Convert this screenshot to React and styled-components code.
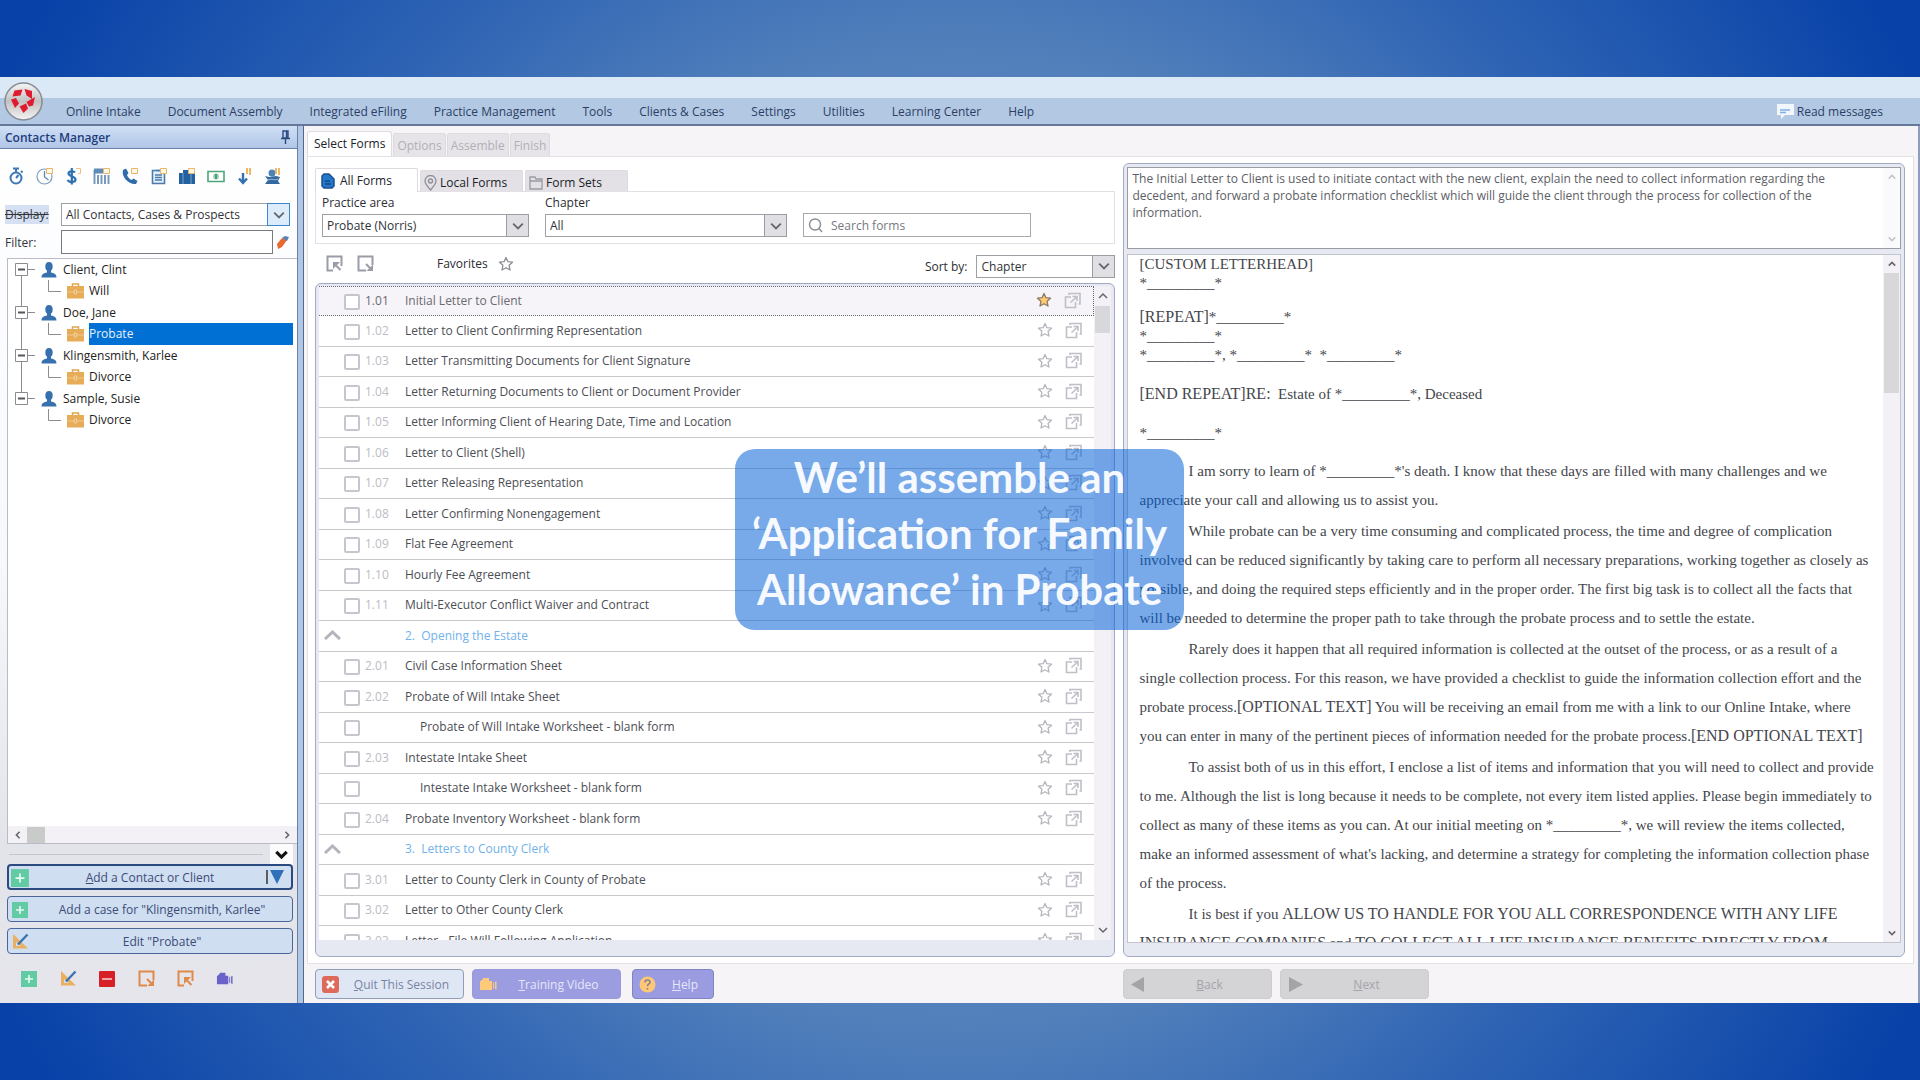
import React, { Component } from 'react';
import styled, { createGlobalStyle } from 'styled-components';

const GlobalStyle = createGlobalStyle`
  * { box-sizing: border-box; }
  body {
    margin: 0;
    font-family: "Open Sans", "Noto Sans", sans-serif;
    font-size: 12px;
    color: #2b2d33;
  }
  button, input, select {
    font-family: inherit;
    font-size: inherit;
    color: inherit;
  }
  svg { display: block; flex: none; }
`;

const Stage = styled.div`
  position: relative;
  display: flex;
  flex-direction: column;
  height: 100vh;
  padding: 77px 0;
  overflow: hidden;
  background: radial-gradient(circle farthest-corner at 50% 50%, #6794c5 0%, #5280bb 44%, #2f64b4 65%, #0842a8 96%);
`;

const Window = styled.div`
  flex: 1;
  min-height: 0;
  display: flex;
  flex-direction: column;
  background: #f6f4f7;
`;

const Header = styled.header`
  position: relative;
  background: #dbe8f5;
  padding-top: 21px;
`;

const Logo = styled.div`
  position: absolute;
  left: 4px;
  top: 5px;
`;

const MenuBar = styled.nav`
  display: flex;
  align-items: center;
  gap: 27px;
  height: 28px;
  padding: 0 37px 0 66px;
  background: #b3c8e2;
  border-bottom: 2px solid #66789a;
  color: #2b3f66;
`;

const MenuLink = styled.a`
  color: inherit;
  text-decoration: none;
  white-space: nowrap;
`;

const MessagesLink = styled(MenuLink)`
  display: flex;
  align-items: center;
  gap: 2px;
  margin-left: auto;
`;

const Body = styled.div`
  flex: 1;
  min-height: 0;
  display: flex;
`;

const SidePanel = styled.aside`
  display: flex;
  flex-direction: column;
  flex: none;
  width: 298px;
  border-right: 1px solid #6a80a8;
  background: linear-gradient(#ffffff 0%, #f6f8fc 50%, #e2e4ea 82%, #e6e5ec 100%);
`;

const SideTitle = styled.h2`
  display: flex;
  align-items: center;
  justify-content: space-between;
  height: 23px;
  margin: 0;
  padding: 0 7px 0 5px;
  font-size: 12px;
  font-weight: 600;
  color: #1d3c7c;
  background: linear-gradient(#cfdff5, #b0c6e6);
  border-bottom: 1px solid #6a80a8;
`;

const ToolRow = styled.div`
  display: flex;
  align-items: center;
  justify-content: space-between;
  height: 54px;
  padding: 0 15px 0 7px;
`;

const IconButton = styled.button`
  display: flex;
  padding: 0;
  border: 0;
  background: none;
`;

const FieldRow = styled.div`
  display: grid;
  grid-template-columns: 56px 1fr;
  align-items: center;
  padding: 0 7px 0 5px;
  margin-bottom: 4px;
`;

const FilterLine = styled.div`
  display: grid;
  grid-template-columns: 1fr 17px;
  align-items: center;
`;

const FieldLabel = styled.label`
  justify-self: start;
  padding: 1px 0;
  color: #33353b;
  background: ${props => props.$struck ? '#d5e1f3' : 'none'};
  text-decoration: ${props => props.$struck ? 'line-through' : 'none'};
`;

const TextInput = styled.input`
  width: 100%;
  height: 24px;
  border: 1px solid #7a7a7e;
  background: #fff;
  outline: none;
`;

const SelectBox = styled.div`
  display: grid;
  grid-template-columns: 1fr 22px;
  height: 23px;
  border: 1px solid #9fa0a6;
  background: #fff;
  color: #303238;
`;

const SelectInput = styled.select`
  grid-row: 1;
  grid-column: 1 / 3;
  width: 100%;
  height: 21px;
  padding: 0 4px;
  border: 0;
  outline: none;
  appearance: none;
  background: transparent;
`;

const SelectArrow = styled.span`
  grid-row: 1;
  grid-column: 2;
  display: flex;
  align-items: center;
  justify-content: center;
  height: 23px;
  margin: -1px -1px 0 0;
  pointer-events: none;
  border: 1px solid ${props => props.$blue ? '#3b86cf' : '#9c9ca2'};
  background: ${props => props.$blue ? '#dcecfa' : '#e0dfe3'};
`;

const Tree = styled.div`
  flex: 1;
  min-height: 0;
  display: flex;
  flex-direction: column;
  margin: 0 0 0 7px;
  background: #fff;
  border: solid #b9bcc4;
  border-width: 1px 0 1px 1px;
  color: #222;
`;

const TreeList = styled.ul`
  flex: 1;
  margin: 0;
  padding: 0;
  list-style: none;
`;

const TreeGroup = styled.li`
  display: grid;
  grid-template-columns: 33px 1fr;
  height: 43px;
`;

const TreeParent = styled.div`
  display: flex;
  align-items: center;
  gap: 6px;
  height: 21px;
`;

const TreeChild = styled.div`
  display: flex;
  align-items: center;
  height: 22px;
`;

const TreeName = styled.span`
  flex: 1;
  margin: 0 4px 0 5px;
  line-height: 22px;
  color: ${props => props.$selected ? '#e8f1fc' : 'inherit'};
  background: ${props => props.$selected ? '#0070d4' : 'none'};
`;

const HScroll = styled.div`
  display: flex;
  align-items: center;
  height: 17px;
  padding: 0 6px;
  background: #f3f1f5;
`;

const HThumb = styled.div`
  width: 18px;
  height: 16px;
  margin: 0 auto 0 5px;
  background: #c9cbcb;
`;

const Divider = styled.div`
  display: flex;
  align-items: center;
  justify-content: space-between;
  height: 16px;
  margin: 2px 4px 2px 9px;
  & > i {
    flex: 1;
    height: 1px;
    margin-right: 7px;
    background: #c2c8c6;
  }
  & > span {
    width: 23px;
    padding: 4px 5px;
    background: #fbfbfc;
  }
`;

const SideButton = styled.button`
  display: grid;
  grid-template-columns: ${props => props.$main ? '24px 1fr 24px' : '24px 1fr'};
  align-items: center;
  height: 26px;
  margin: 0 4px 6px 7px;
  padding: ${props => props.$main ? '0 2px' : '0 4px'};
  border: ${props => props.$main ? '2px solid #2b4a80' : '1px solid #4b669a'};
  border-radius: 4px;
  background: #cfdef0;
  color: #3b4c78;
`;

const SideTools = styled.div`
  display: flex;
  justify-content: space-between;
  padding: 10px 64px 16px 21px;
`;

const Splitter = styled.div`
  flex: none;
  width: 6px;
  background: #b0c8e6;
  border-right: 1px solid #56678a;
`;

const Main = styled.main`
  flex: 1;
  min-width: 0;
  display: flex;
  flex-direction: column;
  padding: 5px 4px 0 3px;
  border-right: 2px solid #8d9cc0;
`;

const StepTabs = styled.div`
  display: flex;
  align-items: flex-end;
  gap: 1px;
  height: 25px;
`;

const StepTab = styled.button`
  height: ${props => props.$active ? '26px' : '23px'};
  margin-bottom: ${props => props.$active ? '-1px' : '0'};
  padding: ${props => props.$active ? '0 6px 2px' : '1px 3px 0'};
  border: solid #dddbe0;
  border-width: 1px 1px 0;
  border-radius: 3px 3px 0 0;
  background: ${props => props.$active ? '#fff' : '#e6e4e8'};
  color: ${props => props.$active ? '#202228' : '#b2b0b6'};
`;

const Panel = styled.div`
  flex: 1;
  min-height: 0;
  display: grid;
  grid-template-columns: minmax(0, 801fr) minmax(0, 782fr);
  gap: 8px;
  padding: 0 8px 6px 7px;
  background: #fff;
  border: 1px solid #e3e1e6;
`;

const FormsColumn = styled.section`
  display: flex;
  flex-direction: column;
  min-height: 0;
  padding-top: 11px;
`;

const FormTabs = styled.div`
  display: flex;
  align-items: flex-end;
  gap: 2px;
  height: 24px;
`;

const FormTab = styled.button`
  position: relative;
  display: flex;
  align-items: center;
  gap: ${props => props.$active ? '5px' : '3px'};
  width: 103px;
  height: ${props => props.$active ? '24px' : '22px'};
  padding: ${props => props.$active ? '0 0 0 5px' : '2px 0 0 3px'};
  border: solid #dddbe0;
  border-width: 1px 1px 0;
  border-radius: 2px 2px 0 0;
  background: ${props => props.$active ? '#fff' : '#e3e1e6'};
  color: #202228;
  font-weight: ${props => props.$active ? 400 : 500};
`;

const Filters = styled.div`
  display: grid;
  grid-template-columns: 207px 242px 228px;
  column-gap: 16px;
  align-items: end;
  height: 53px;
  margin-top: -1px;
  padding: 0 6px 6px;
  border: 1px solid #e2e0e5;
`;

const FilterField = styled.div`
  display: flex;
  flex-direction: column;
  gap: 3px;
  line-height: 17px;
`;

const SearchBox = styled.label`
  display: flex;
  align-items: center;
  gap: 8px;
  height: 24px;
  padding: 0 4px;
  border: 1px solid #a9a9b0;
`;

const SearchInput = styled.input`
  flex: 1;
  min-width: 0;
  padding: 0;
  border: 0;
  outline: none;
  background: none;
  &::placeholder {
    color: #77797f;
    opacity: 1;
  }
`;

const ListTools = styled.div`
  display: flex;
  align-items: center;
  height: 39px;
  padding: 2px 0 2px 11px;
  gap: 14px;
`;

const Favorites = styled.span`
  display: flex;
  align-items: center;
  gap: 10px;
  margin-left: 49px;
`;

const SortBy = styled.div`
  display: grid;
  grid-template-columns: auto 139px;
  align-items: center;
  gap: 9px;
  margin-left: auto;
  padding-top: 5px;
`;

const Frame = styled.div`
  flex: 1;
  min-height: 0;
  display: flex;
  padding: 2px 3px 16px;
  border: 1px solid #a4a9c6;
  border-radius: 6px;
  background: #e6e8f2;
`;

const FormRows = styled.div`
  flex: 1;
  min-width: 0;
  overflow: hidden;
  background: #fff;
`;

const FormRow = styled.div`
  display: grid;
  grid-template-columns: 25px 21px 40px 1fr 28px 29px;
  align-items: center;
  height: 30px;
  padding-bottom: 2px;
  border-bottom: 1px solid #c9c8cd;
  color: ${props => props.$active ? '#6a6a72' : '#4c4e55'};
  &:nth-child(even) { height: 31px; }
  ${props => props.$active && `
    border: 1px dotted #66666e;
    background: #f6f4f8;
    margin-left: -1px;
  `}
`;

const FormNumber = styled.span`
  color: ${props => props.$active ? '#6a6a72' : '#bcbcc4'};
`;

const FormTitle = styled.label`
  padding-left: ${props => props.$indent ? '15px' : '0'};
  white-space: pre;
`;

const ChapterTitle = styled.span`
  grid-column: 4;
  color: #70b2ea;
  white-space: pre;
`;

const Chevron = styled.span`
  grid-column: 1;
  padding-left: 5px;
`;

const Check = styled.input`
  appearance: none;
  width: 16px;
  height: 16px;
  margin: 3px 0 0;
  border: 2px solid #c6c6cf;
  border-radius: 2px;
  background: #fff;
`;

const VScroll = styled.div`
  flex: none;
  display: flex;
  flex-direction: column;
  align-items: center;
  width: 17px;
  padding: 5px 0;
  background: ${props => props.$plain ? '#faf9fb' : '#f3f1f6'};
  & > svg:last-child { margin-top: auto; }
`;

const VThumb = styled.div`
  width: 15px;
  height: ${props => props.$tall ? '120px' : '27px'};
  margin-top: 5px;
  background: #d8d8da;
`;

const PreviewColumn = styled.section`
  display: flex;
  flex-direction: column;
  min-height: 0;
  padding-top: 6px;
`;

const PreviewFrame = styled(Frame)`
  flex-direction: column;
  gap: 5px;
  padding: 3px 3px 13px;
`;

const Summary = styled.div`
  display: flex;
  height: 82px;
  border: 1px solid #9b9ba6;
  background: #fff;
  color: #5c5e65;
  & > p {
    flex: 1;
    margin: 0;
    padding: 2px 0 0 4px;
    line-height: 17px;
    white-space: nowrap;
  }
`;

const Document = styled.div`
  flex: 1;
  min-height: 0;
  display: flex;
  border: 1px solid #c4c4ce;
  background: #fff;
`;

const Page = styled.article`
  flex: 1;
  min-width: 0;
  overflow: hidden;
  padding-left: 11px;
  font-family: "Liberation Serif", "Times New Roman", serif;
  font-size: 15px;
  color: #44464c;
  white-space: pre;
`;

const Block = styled.p`
  margin: 0 0 ${props => props.$gap || 0}px;
  line-height: 19px;
`;

const Paragraph = styled.p`
  margin: 0 0 2px;
  line-height: 29px;
  text-indent: 49px;
`;

const Caps = styled.span`
  font-size: 16px;
  line-height: 1;
`;

const Footer = styled.footer`
  display: grid;
  grid-template-columns: minmax(0, 808fr) minmax(0, 791fr);
  padding: 5px 0 4px 8px;
`;

const ButtonGroup = styled.div`
  display: flex;
  gap: 8px;
`;

const FooterButton = styled.button`
  display: grid;
  grid-template-columns: 18px 1fr;
  align-items: center;
  gap: 6px;
  width: ${props => props.$small ? '82px' : '149px'};
  height: 30px;
  margin-left: ${props => props.$small ? '3px' : '0'};
  padding: 0 6px;
  border: 1px solid ${props => props.$edge};
  border-radius: 4px;
  background: ${props => props.$fill};
  color: ${props => props.$ink};
`;

const Callout = styled.div`
  position: absolute;
  left: 50%;
  top: 449px;
  width: 449px;
  height: 181px;
  margin-left: -225px;
  border-radius: 20px;
  background: rgba(0, 95, 215, 0.53);
  color: rgba(255, 255, 255, 0.94);
  font-family: Lato, sans-serif;
  font-size: 42px;
  font-weight: 700;
  line-height: 56px;
  text-align: center;
  white-space: nowrap;
`;

const ArrowIcon = ({ dir = 'down', size = 10, color = '#66676d', width = 2 }) => {
  const paths = {
    down: 'M1 3l4 4 4-4',
    up: 'M1 7l4-4 4 4',
    left: 'M7 1L3 5l4 4',
    right: 'M3 1l4 4-4 4'
  };
  return (
    <svg width={size} height={size} viewBox="0 0 10 10" fill="none" stroke={color} strokeWidth={width}>
      <path d={paths[dir]} />
    </svg>
  );
};

const Icon = ({ children, size = 18 }) => (
  <svg width={size} height={size} viewBox="0 0 18 18" fill="none">{children}</svg>
);

const NoteTag = () => <path d="M10.5 1.5h6v5h-6z" fill="#fff6e4" stroke="#e9b76a" />;
const LockTag = () => <path d="M11 1h2v6h-2zM14 1h2v7h-2z" fill="#eeb865" />;

const StarIcon = ({ filled, color = '#b5b5bd', size = 16 }) => (
  <svg width={size} height={size} viewBox="0 0 16 16">
    <path
      d="M8 1.5l1.900 4.200 4.600.5-3.400 3.100.9 4.700L8 11.700 4 14l.9-4.700L1.500 6.200l4.600-.5z"
      fill={filled ? '#ffcb74' : '#fff'}
      stroke={filled ? '#8a7a66' : color}
      strokeWidth="1.300"
      strokeLinejoin="round"
    />
  </svg>
);

const OpenIcon = () => (
  <svg width="17" height="17" viewBox="0 0 17 17" fill="none" stroke="#bfbfc7" strokeWidth="1.600">
    <path d="M7 5H1.500v10.500h10V10" />
    <path d="M5 3V1.500h11V12h-1.500" />
    <path d="M6.500 10.500L13 4.500M8.500 4.500H13V9" />
  </svg>
);

const InArrowIcon = ({ color, size = 17 }) => (
  <svg width={size} height={size} viewBox="0 0 17 17" fill="none" stroke={color} strokeWidth="2">
    <path d="M7 15.500H1.500v-14h14V11" />
    <path d="M14.500 15L9 9.500" />
    <path d="M7 7h7l-7 7z" fill={color} stroke="none" />
  </svg>
);

const OutArrowIcon = ({ color, size = 17 }) => (
  <svg width={size} height={size} viewBox="0 0 17 17" fill="none" stroke={color} strokeWidth="2">
    <path d="M9 15.500H1.500v-14h14V10" />
    <path d="M9 9l5 5" />
    <path d="M16 9.500V16H9.500z" fill={color} stroke="none" />
  </svg>
);

const PlusIcon = ({ size = 17 }) => (
  <svg width={size} height={size} viewBox="0 0 17 17">
    <path d="M0 1h16v16H0z" fill="#62cba3" />
    <path d="M8 5v8M4 9h8" stroke="#e4faf0" strokeWidth="1.600" />
  </svg>
);

const EditIcon = () => (
  <svg width="17" height="17" viewBox="0 0 17 17">
    <path d="M1 1v14.500h15z" fill="#eab060" />
    <path d="M4 9v4h5z" fill="#cfdef0" />
    <path d="M15.500 1.500L6 11.500" stroke="#3b74b4" strokeWidth="2.400" />
  </svg>
);

const CameraIcon = ({ color, size = 18 }) => (
  <svg width={size} height={size} viewBox="0 0 18 18" fill={color}>
    <path d="M1 6.500L4 4V3h6v3h3v9H1z" />
    <path d="M14 8l1-1v7l-1-1zM16 7l1.500-1v9L16 14z" />
  </svg>
);

const PersonIcon = () => (
  <svg width="16" height="16" viewBox="0 0 16 16" fill="#3671ae">
    <ellipse cx="8" cy="4.500" rx="3.700" ry="4.500" />
    <path d="M6 8h4v2.500c3 .5 5.500 1.500 5.500 5H.5c0-3.500 2.500-4.500 5.500-5z" />
  </svg>
);

const CaseIcon = () => (
  <svg width="17" height="16" viewBox="0 0 17 16">
    <path d="M5.500 3V1h6v2" fill="none" stroke="#dfa650" strokeWidth="1.500" />
    <path d="M0 3h17v12.500H0z" fill="#e6ac57" />
    <path d="M0 9h6.500M10.500 9H17" stroke="#f0c98c" />
    <ellipse cx="8.500" cy="9" rx="1.500" ry="2.200" fill="none" stroke="#f7dcae" />
  </svg>
);

const LogoIcon = () => (
  <svg width="39" height="39" viewBox="0 0 39 39">
    <defs>
      <linearGradient id="silver" x1="0" y1="0" x2="0" y2="1">
        <stop offset="0" stopColor="#f6f6f6" />
        <stop offset="0.500" stopColor="#c2c2c2" />
        <stop offset="1" stopColor="#f4f4f4" />
      </linearGradient>
    </defs>
    <circle cx="19.500" cy="19.500" r="18.500" fill="url(#silver)" stroke="#858b95" strokeWidth="1.500" />
    <g fill="#e01b30">
      <path d="M10.500 8.500l8-1-2 6-8 1z" />
      <path d="M20.500 7l7.500 2v8l-5.500-3.500z" />
      <path d="M31 15l-2 8.500-4 1-2.500-4.500z" />
      <path d="M15.500 24.500l6.500-3 2 5-4.500 4.500z" />
      <path d="M7 17.500l5-1.500 3 5.500-4 4.500z" />
    </g>
  </svg>
);

const sideIcons = [
  <Icon><circle cx="9" cy="11" r="5.500" stroke="#3f78b4" strokeWidth="2" /><path d="M6 1.500h6M9 1.500V5M9 11l2.500-3M14 4l1.500 1.500" stroke="#3f78b4" strokeWidth="2" /></Icon>,
  <Icon><circle cx="8.500" cy="9.500" r="7.500" stroke="#7f9cbd" strokeWidth="1.200" /><path d="M8.500 4v6l4 3" stroke="#5f85b0" strokeWidth="1.300" /><NoteTag /></Icon>,
  <Icon><path d="M11 5.500C10 4 4.500 3.500 4.500 6.500S11.500 9 11.500 12.500 5 15.500 3.500 13M7.800 1v16.500" stroke="#2f70b2" strokeWidth="2.200" /><path d="M12 1.500h4.500v5H14" stroke="#ecc083" /></Icon>,
  <Icon><path d="M1.500 3v14M5 8v9M8.500 8v9M12 8v9M15.500 8v9" stroke="#7899bd" strokeWidth="2" /><path d="M1 1.500h9v5H1z" fill="#5f8bb8" /><NoteTag /></Icon>,
  <Icon><path d="M2 3l3-1.500L7.500 6 6 8c1 2.500 2.500 4 4.500 5l2-1.500 4 2.500-1.500 3C8 18 0 10 2 3z" fill="#2f6ca8" /><NoteTag /></Icon>,
  <Icon><path d="M2.500 3.500h12v13h-12z" fill="#e6eef7" stroke="#4a7bad" strokeWidth="1.600" /><path d="M5 8h7M5 10.500h7M5 13h7M6 3.500h4" stroke="#4a7bad" strokeWidth="1.400" /><NoteTag /></Icon>,
  <Icon><path d="M1 6h16v11H1zM5 3h7v3H5z" fill="#23609f" /><path d="M5 6v11M13 6v11" stroke="#7ba3cb" /><NoteTag /></Icon>,
  <Icon><path d="M1 4.500h16v10H1z" fill="#fff" stroke="#4fa57c" strokeWidth="1.600" /><circle cx="9" cy="9.500" r="3" fill="#9fd2b8" /><path d="M9 7v5" stroke="#2f8a5c" strokeWidth="1.500" /></Icon>,
  <Icon><path d="M8 6v10M4 11.500l4 4.500 4-4.500" stroke="#3671ae" strokeWidth="2.400" /><LockTag /></Icon>,
  <Icon><circle cx="8" cy="6" r="3.500" fill="#4c82b8" /><path d="M1 9l4 1 7-1 4 1-2 4 2 3H1l3-4z" fill="#34699f" /><path d="M4 13c4-2 7 1 10-1" stroke="#9abbe0" /><LockTag /></Icon>
];

const menuItems = ['Online Intake', 'Document Assembly', 'Integrated eFiling', 'Practice Management', 'Tools',
  'Clients & Cases', 'Settings', 'Utilities', 'Learning Center', 'Help'];

const contacts = [
  { name: 'Client, Clint', matter: 'Will' },
  { name: 'Doe, Jane', matter: 'Probate', selected: true },
  { name: 'Klingensmith, Karlee', matter: 'Divorce' },
  { name: 'Sample, Susie', matter: 'Divorce' }
];

const forms = [
  { number: '1.01', title: 'Initial Letter to Client', active: true },
  { number: '1.02', title: 'Letter to Client Confirming Representation' },
  { number: '1.03', title: 'Letter Transmitting Documents for Client Signature' },
  { number: '1.04', title: 'Letter Returning Documents to Client or Document Provider' },
  { number: '1.05', title: 'Letter Informing Client of Hearing Date, Time and Location' },
  { number: '1.06', title: 'Letter to Client (Shell)' },
  { number: '1.07', title: 'Letter Releasing Representation' },
  { number: '1.08', title: 'Letter Confirming Nonengagement' },
  { number: '1.09', title: 'Flat Fee Agreement' },
  { number: '1.10', title: 'Hourly Fee Agreement' },
  { number: '1.11', title: 'Multi-Executor Conflict Waiver and Contract' },
  { chapter: '2.  Opening the Estate' },
  { number: '2.01', title: 'Civil Case Information Sheet' },
  { number: '2.02', title: 'Probate of Will Intake Sheet' },
  { title: 'Probate of Will Intake Worksheet - blank form', indent: true },
  { number: '2.03', title: 'Intestate Intake Sheet' },
  { title: 'Intestate Intake Worksheet - blank form', indent: true },
  { number: '2.04', title: 'Probate Inventory Worksheet - blank form' },
  { chapter: '3.  Letters to County Clerk' },
  { number: '3.01', title: 'Letter to County Clerk in County of Probate' },
  { number: '3.02', title: 'Letter to Other County Clerk' },
  { number: '3.03', title: 'Letter - File Will Following Application' }
];

const blank = '*_________*';

const letterHead = [
  { text: `[CUSTOM LETTERHEAD]\n${blank}`, gap: 15 },
  { caps: '[REPEAT]', text: `${blank}\n${blank}\n${blank}, ${blank}  ${blank}`, gap: 20 },
  { caps: '[END REPEAT]RE:', text: `  Estate of ${blank}, Deceased`, gap: 20 },
  { text: blank, gap: 14 }
];

const Select = ({ id, value, blue }) => (
  <SelectBox>
    <SelectInput id={id} defaultValue={value}>
      <option>{value}</option>
    </SelectInput>
    <SelectArrow $blue={blue}><ArrowIcon size={12} width={1.5} /></SelectArrow>
  </SelectBox>
);

const Contacts = () => (
  <SidePanel>
    <SideTitle>
      Contacts Manager
      <svg width="10" height="14" viewBox="0 0 10 14" fill="none" stroke="#2b4a80" strokeWidth="1.400">
        <path d="M3 1h5v7H3zM1 8.500h9M5.500 9v5M6.500 1v7" />
      </svg>
    </SideTitle>
    <ToolRow>
      {sideIcons.map((icon, i) => <IconButton key={i}>{icon}</IconButton>)}
    </ToolRow>
    <FieldRow>
      <FieldLabel htmlFor="display" $struck>Display:</FieldLabel>
      <Select id="display" value="All Contacts, Cases & Prospects" blue />
    </FieldRow>
    <FieldRow>
      <FieldLabel htmlFor="filter">Filter:</FieldLabel>
      <FilterLine>
        <TextInput id="filter" />
        <IconButton aria-label="Clear filter">
          <svg width="17" height="14" viewBox="0 0 17 14">
            <path d="M4 9l5-6 5 2-5 7-4 2z" fill="#e8682f" />
            <path d="M9 3l3-2 4 1-2 4z" fill="#5a7fb4" />
          </svg>
        </IconButton>
      </FilterLine>
    </FieldRow>
    <Tree>
      <TreeList>
        {contacts.map((contact, i) => (
          <TreeGroup key={contact.name}>
            <svg width="33" height="43" viewBox="0 0 33 43" fill="none" stroke="#8b8b90">
              <path d="M7.500 4.500h12v12h-12zM20 10.500h7" />
              <path d="M10 10.500h7" stroke="#55555c" strokeWidth="2" />
              {i < contacts.length - 1 && <path d="M13.500 17v26" />}
              {i > 0 && <path d="M13.500 0v4" />}
            </svg>
            <div>
              <TreeParent><PersonIcon />{contact.name}</TreeParent>
              <TreeChild>
                <svg width="20" height="22" viewBox="0 0 20 22" fill="none" stroke="#8b8b90">
                  <path d="M7.500 0v11.500H20" />
                </svg>
                <svg width="6" height="22" />
                <CaseIcon />
                <TreeName $selected={contact.selected}>{contact.matter}</TreeName>
              </TreeChild>
            </div>
          </TreeGroup>
        ))}
      </TreeList>
      <HScroll>
        <ArrowIcon dir="left" size={8} />
        <HThumb />
        <ArrowIcon dir="right" size={8} />
      </HScroll>
    </Tree>
    <Divider><i /><span><ArrowIcon size={13} color="#111" width={2.400} /></span></Divider>
    <SideButton $main>
      <PlusIcon size={19} />
      <span><u>A</u>dd a Contact or Client</span>
      <svg width="20" height="16" viewBox="0 0 20 16">
        <path d="M2 1v14" stroke="#333" strokeWidth="1.500" />
        <path d="M5 1h14l-7 14z" fill="#2f70b8" />
      </svg>
    </SideButton>
    <SideButton><PlusIcon /><span>Add a case for "Klingensmith, Karlee"</span></SideButton>
    <SideButton><EditIcon /><span>Edit "Probate"</span></SideButton>
    <SideTools>
      <IconButton aria-label="Add"><PlusIcon /></IconButton>
      <IconButton aria-label="Edit"><EditIcon /></IconButton>
      <IconButton aria-label="Remove">
        <svg width="17" height="17" viewBox="0 0 17 17">
          <rect y="1" width="16" height="16" rx="1" fill="#d61f26" />
          <path d="M3 9h10" stroke="#f5b5b5" strokeWidth="1.800" />
        </svg>
      </IconButton>
      <IconButton aria-label="Expand"><OutArrowIcon color="#e08a4a" /></IconButton>
      <IconButton aria-label="Collapse"><InArrowIcon color="#e08a4a" /></IconButton>
      <IconButton aria-label="Video"><CameraIcon color="#6a62c8" size={17} /></IconButton>
    </SideTools>
  </SidePanel>
);

const Letter = () => (
  <Page>
    {letterHead.map((part, i) => (
      <Block key={i} $gap={part.gap}>{part.caps && <Caps>{part.caps}</Caps>}{part.text}</Block>
    ))}
    <Paragraph>
      I am sorry to learn of {blank}'s death. I know that these days are filled with many challenges and we<br />
      appreciate your call and allowing us to assist you.
    </Paragraph>
    <Paragraph>
      While probate can be a very time consuming and complicated process, the time and degree of complication<br />
      involved can be reduced significantly by taking care to perform all necessary preparations, working together as closely as<br />
      possible, and doing the required steps efficiently and in the proper order. The first big task is to collect all the facts that<br />
      will be needed to determine the proper path to take through the probate process and to settle the estate.
    </Paragraph>
    <Paragraph>
      Rarely does it happen that all required information is collected at the outset of the process, or as a result of a<br />
      single collection process. For this reason, we have provided a checklist to guide the information collection effort and the<br />
      probate process.<Caps>[OPTIONAL TEXT]</Caps> You will be receiving an email from me with a link to our Online Intake, where<br />
      you can enter in many of the pertinent pieces of information needed for the probate process.<Caps>[END OPTIONAL TEXT]</Caps>
    </Paragraph>
    <Paragraph>
      To assist both of us in this effort, I enclose a list of items and information that you will need to collect and provide<br />
      to me. Although the list is long because it needs to be complete, not every item listed applies. Please begin immediately to<br />
      collect as many of these items as you can. At our initial meeting on {blank}, we will review the items collected,<br />
      make an informed assessment of what's lacking, and determine a strategy for completing the information collection phase<br />
      of the process.
    </Paragraph>
    <Paragraph>
      It is best if you <Caps>ALLOW US TO HANDLE FOR YOU ALL CORRESPONDENCE WITH ANY LIFE</Caps><br />
      <Caps>INSURANCE COMPANIES</Caps> and <Caps>TO COLLECT ALL LIFE INSURANCE BENEFITS DIRECTLY FROM</Caps>
    </Paragraph>
  </Page>
);

class App extends Component {
  constructor(props) {
    super(props);
    this.state = {
      checked: []
    }
    this.handleCheck = this.handleCheck.bind(this);
  }

  handleCheck(title) {
    const { checked } = this.state;
    this.setState({
      checked: checked.includes(title) ? checked.filter(item => item !== title) : checked.concat(title)
    });
  }

  renderRow(form, i) {
    if (form.chapter) {
      return (
        <FormRow key={i}>
          <Chevron>
            <svg width="17" height="10" viewBox="0 0 17 10" fill="none" stroke="#b4b4bc" strokeWidth="3">
              <path d="M1 9l7.500-7L16 9" />
            </svg>
          </Chevron>
          <ChapterTitle>{form.chapter}</ChapterTitle>
        </FormRow>
      );
    }
    return (
      <FormRow key={i} $active={form.active}>
        <span />
        <Check
          type="checkbox"
          id={`form-${i}`}
          checked={this.state.checked.includes(form.title)}
          onChange={() => { this.handleCheck(form.title) }}
        />
        <FormNumber $active={form.active}>{form.number}</FormNumber>
        <FormTitle htmlFor={`form-${i}`} $indent={form.indent}>{form.title}</FormTitle>
        <IconButton aria-label="Favorite"><StarIcon filled={form.active} /></IconButton>
        <IconButton aria-label="Open"><OpenIcon /></IconButton>
      </FormRow>
    );
  }

  render() {
    return (
      <Stage>
        <GlobalStyle />
        <Window>
          <Header>
            <MenuBar>
              {menuItems.map(item => <MenuLink href="#" key={item}>{item}</MenuLink>)}
              <MessagesLink href="#">
                <svg width="18" height="18" viewBox="0 0 18 18">
                  <path d="M0 2h17v11H8l-4 4v-4H0z" fill="#f1f7fd" />
                  <path d="M3 8h10M3 10.500h6" stroke="#7fb0e6" strokeWidth="1.500" />
                </svg>
                Read messages
              </MessagesLink>
            </MenuBar>
            <Logo><LogoIcon /></Logo>
          </Header>
          <Body>
            <Contacts />
            <Splitter />
            <Main>
              <StepTabs>
                <StepTab $active>Select Forms</StepTab>
                <StepTab>Options</StepTab>
                <StepTab>Assemble</StepTab>
                <StepTab>Finish</StepTab>
              </StepTabs>
              <Panel>
                <FormsColumn>
                  <FormTabs>
                    <FormTab $active>
                      <svg width="14" height="16" viewBox="0 0 14 16">
                        <path d="M1 3l2-2h5l5 5v7l-2 2H3l-2-2z" fill="#2277cc" stroke="#1d4f8c" strokeWidth="1.500" />
                        <path d="M4 8h5M4 11h6" stroke="#134a86" strokeWidth="1.300" />
                      </svg>
                      All Forms
                    </FormTab>
                    <FormTab>
                      <svg width="13" height="16" viewBox="0 0 13 16" fill="none" stroke="#8f8f98" strokeWidth="1.300">
                        <path d="M6.500 15C3 11 1 8.500 1 6a5.500 5.500 0 0 1 11 0c0 2.500-2 5-5.500 9z" />
                        <circle cx="6.500" cy="6" r="2" />
                      </svg>
                      Local Forms
                    </FormTab>
                    <FormTab>
                      <svg width="14" height="14" viewBox="0 0 14 14" fill="none" stroke="#9a9aa2" strokeWidth="1.300">
                        <path d="M1 13V1h5l1 2h6v10zM1 5h12" />
                      </svg>
                      Form Sets
                    </FormTab>
                  </FormTabs>
                  <Filters>
                    <FilterField>
                      <label htmlFor="area">Practice area</label>
                      <Select id="area" value="Probate (Norris)" />
                    </FilterField>
                    <FilterField>
                      <label htmlFor="chapter">Chapter</label>
                      <Select id="chapter" value="All" />
                    </FilterField>
                    <SearchBox>
                      <svg width="15" height="15" viewBox="0 0 15 15" fill="none" stroke="#8a8c98" strokeWidth="1.400">
                        <circle cx="7" cy="6.500" r="5.500" /><path d="M11 10.500l3 3.500" />
                      </svg>
                      <SearchInput type="search" placeholder="Search forms" aria-label="Search forms" />
                    </SearchBox>
                  </Filters>
                  <ListTools>
                    <IconButton aria-label="Collapse all"><InArrowIcon color="#9a9ca8" size={17} /></IconButton>
                    <IconButton aria-label="Expand all"><OutArrowIcon color="#9a9ca8" size={17} /></IconButton>
                    <Favorites>Favorites <StarIcon color="#8d8d95" /></Favorites>
                    <SortBy>
                      <label htmlFor="sort">Sort by:</label>
                      <Select id="sort" value="Chapter" />
                    </SortBy>
                  </ListTools>
                  <Frame>
                    <FormRows>{forms.map((form, i) => this.renderRow(form, i))}</FormRows>
                    <VScroll>
                      <ArrowIcon dir="up" width={1.5} />
                      <VThumb />
                      <ArrowIcon width={1.5} />
                    </VScroll>
                  </Frame>
                </FormsColumn>
                <PreviewColumn>
                  <PreviewFrame>
                    <Summary>
                      <p>
                        The Initial Letter to Client is used to initiate contact with the new client, explain the need to collect information regarding the<br />
                        decedent, and forward a probate information checklist which will guide the client through the process for collection of the<br />
                        information.
                      </p>
                      <VScroll $plain>
                        <ArrowIcon dir="up" size={8} color="#c4c4ca" />
                        <ArrowIcon size={8} color="#c4c4ca" />
                      </VScroll>
                    </Summary>
                    <Document>
                      <Letter />
                      <VScroll>
                        <ArrowIcon dir="up" size={8} />
                        <VThumb $tall />
                        <ArrowIcon size={8} />
                      </VScroll>
                    </Document>
                  </PreviewFrame>
                </PreviewColumn>
              </Panel>
              <Footer>
                <ButtonGroup>
                  <FooterButton $fill="#e0e7f4" $edge="#8f9cba" $ink="#7784a4">
                    <svg width="17" height="17" viewBox="0 0 17 17">
                      <rect width="17" height="17" rx="3" fill="#dd6a5a" />
                      <path d="M5 5l7 7M12 5l-7 7" stroke="#fff" strokeWidth="2.600" />
                    </svg>
                    <span><u>Q</u>uit This Session</span>
                  </FooterButton>
                  <FooterButton $fill="#9c9de0" $edge="#9a9bdc" $ink="#e6e6fa">
                    <CameraIcon color="#ffc97a" />
                    <span><u>T</u>raining Video</span>
                  </FooterButton>
                  <FooterButton $small $fill="#9a9be0" $edge="#7f84c0" $ink="#e6e6fa">
                    <svg width="17" height="17" viewBox="0 0 17 17">
                      <circle cx="8.500" cy="8.500" r="8" fill="#fcc877" />
                      <path d="M6 6.500c0-3.500 5-3.200 5-.3 0 1.800-2.500 1.800-2.500 4M8.500 12v1.500" fill="none" stroke="#8f7f8f" strokeWidth="1.600" />
                    </svg>
                    <span><u>H</u>elp</span>
                  </FooterButton>
                </ButtonGroup>
                <ButtonGroup>
                  <FooterButton $fill="#d4d3d6" $edge="#cdccd0" $ink="#a3a4aa">
                    <svg width="16" height="15" viewBox="0 0 16 15"><path d="M14 0v15L1 7.500z" fill="#a2a4a8" /></svg>
                    <span><u>B</u>ack</span>
                  </FooterButton>
                  <FooterButton $fill="#d4d3d6" $edge="#cdccd0" $ink="#a3a4aa">
                    <svg width="16" height="15" viewBox="0 0 16 15"><path d="M2 0v15l14-7.500z" fill="#a2a4a8" /></svg>
                    <span><u>N</u>ext</span>
                  </FooterButton>
                </ButtonGroup>
              </Footer>
            </Main>
          </Body>
        </Window>
        <Callout>We’ll assemble an<br />‘Application for Family<br />Allowance’ in Probate</Callout>
      </Stage>
    );
  }
}

export default App;
